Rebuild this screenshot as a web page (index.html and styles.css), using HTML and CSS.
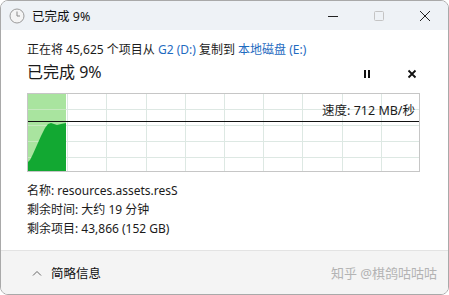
FILE: index.html
```html
<!DOCTYPE html>
<html lang="zh-CN">
<head>
  <meta charset="UTF-8" />
  <title>已完成 9%</title>
  <link rel="stylesheet" href="styles.css">
</head>
<body>
  <div class="window">
    <div class="titlebar">
      <svg class="app-icon" width="16" height="16" viewBox="0 0 16 16">
        <circle cx="8" cy="8" r="7" fill="#f4f4f4" stroke="#9a9a9a" stroke-width="1"/>
        <path d="M8 3.5 V8 H11" fill="none" stroke="#8a8a8a" stroke-width="1"/>
      </svg>
      <span class="title">已完成 9%</span>
      <div class="win-buttons">
        <svg width="46" height="30" viewBox="0 0 46 30"><path d="M18 15.5 H28" stroke="#222" stroke-width="1"/></svg>
        <svg width="46" height="30" viewBox="0 0 46 30"><rect x="18.5" y="10.5" width="9" height="9" rx="1" fill="none" stroke="#c4c4c4"/></svg>
        <svg width="46" height="30" viewBox="0 0 46 30"><path d="M18 10 L28 20 M28 10 L18 20" stroke="#222" stroke-width="1"/></svg>
      </div>
    </div>

    <div class="content">
      <div class="copy-line">正在将 45,625 个项目从 <span class="link">G2 (D:)</span> 复制到 <span class="link">本地磁盘 (E:)</span></div>
      <div class="status-row">
        <span class="status">已完成 9%</span>
        <div class="actions">
          <svg width="12" height="12" viewBox="0 0 12 12"><rect x="3" y="2" width="2" height="8" fill="#111"/><rect x="7" y="2" width="2" height="8" fill="#111"/></svg>
          <svg width="12" height="12" viewBox="0 0 12 12"><path d="M2.5 2.5 L9.5 9.5 M9.5 2.5 L2.5 9.5" stroke="#111" stroke-width="1.8"/></svg>
        </div>
      </div>

      <div class="graph">
        <svg width="393" height="79" viewBox="0 0 393 79">
          <rect x="0.5" y="0.5" width="392" height="78" fill="#fff" stroke="#c6c6c6"/>
          <rect x="1" y="1" width="38" height="77" fill="#a9e49f"/>
          <g stroke="#dde8e3" stroke-width="1">
            <path d="M40.5 1 V78 M79.5 1 V78 M119.5 1 V78 M158.5 1 V78 M197.5 1 V78 M236.5 1 V78 M275.5 1 V78 M315.5 1 V78 M354.5 1 V78"/>
            <path d="M1 16.5 H392 M1 32.5 H392 M1 48.5 H392 M1 64.5 H392"/>
          </g>
          <g stroke="#c6e9bf" stroke-width="1">
            <path d="M1 16.5 H39 M1 32.5 H39 M1 48.5 H39 M1 64.5 H39"/>
          </g>
          <path d="M1 78 V69 L3 67 L6 61 L10 52 L14 43 L18 35 L21 31 L24 30 L27 31 L30 32 L34 31 L39 30 V78 Z" fill="#12a832"/>
          <path d="M1 28.5 H392" stroke="#111" stroke-width="1"/>
        </svg>
        <span class="speed">速度: 712 MB/秒</span>
      </div>

      <div class="details">
        <div>名称: resources.assets.resS</div>
        <div>剩余时间: 大约 19 分钟</div>
        <div>剩余项目: 43,866 (152 GB)</div>
      </div>
    </div>

    <div class="footer">
      <svg class="chevron" width="10" height="6" viewBox="0 0 10 6"><path d="M1 5.5 L5 1.5 L9 5.5" fill="none" stroke="#666" stroke-width="1"/></svg>
      <span class="less">简略信息</span>
      <span class="watermark">知乎 @棋鸽咕咕咕</span>
    </div>
  </div>
</body>
</html>
```

FILE: styles.css
```css
* { box-sizing: border-box; }
body {
  margin: 0;
  background: #fff;
  font-family: "Noto Sans", "Noto Sans CJK SC", sans-serif;
  font-size: 12px;
  color: #1b1b1b;
}

.window {
  width: 449px;
  height: 295px;
  border: 1px solid #a9a9a9;
  border-radius: 8px;
  overflow: hidden;
  display: flex;
  flex-direction: column;
  background: #fff;
}

.titlebar {
  height: 29px;
  background: #eef2f6;
  display: flex;
  align-items: center;
  padding-left: 8px;
}

.app-icon { margin-right: 7px; }

.title {
  font-size: 12.5px;
  color: #111;
}

.win-buttons {
  margin-left: auto;
  display: flex;
}

.content {
  flex: 1;
  padding: 11px 0 0 26px;
}

.copy-line {
  line-height: 18px;
}

.link { color: #1f6bbf; }

.status-row {
  display: flex;
  align-items: center;
  margin-top: 2px;
  height: 22px;
  width: 391px;
}

.status {
  font-size: 16px;
  line-height: 22px;
}

.actions {
  margin-left: auto;
  display: flex;
  gap: 33px;
  padding-top: 4px;
}

.graph {
  position: relative;
  width: 393px;
  height: 79px;
  margin-top: 10px;
}

.graph svg { display: block; }

.speed {
  position: absolute;
  right: 5px;
  top: 10px;
  font-size: 12.5px;
  line-height: 16px;
}

.details {
  margin-top: 9px;
  line-height: 19px;
}

.footer {
  height: 44px;
  border-top: 1px solid #e3e3e3;
  background: #f4f4f4;
  display: flex;
  align-items: center;
  padding-left: 31px;
  padding-right: 11px;
}

.chevron { margin-right: 9px; }

.less {
  font-size: 12.5px;
  color: #111;
}

.watermark {
  margin-left: auto;
  font-size: 13px;
  color: #b3b3b3;
}
```
